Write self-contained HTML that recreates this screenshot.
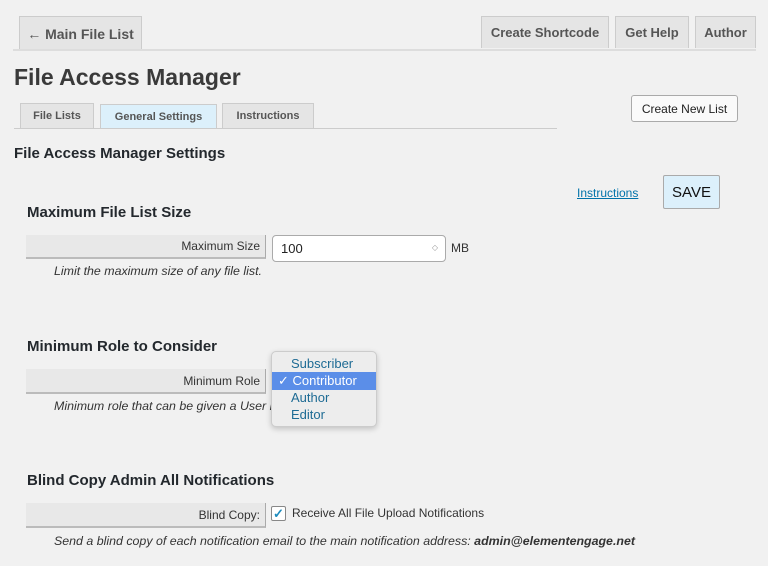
<!DOCTYPE html>
<html><head><meta charset="utf-8"><style>
*{box-sizing:border-box;margin:0;padding:0}
body{width:768px;height:566px;background:#f1f1f1;font-family:"Liberation Sans",sans-serif;color:#23282d;position:relative;overflow:hidden}
.a{position:absolute}
.tab{position:absolute;background:#e5e5e5;border:1px solid #ccc;border-bottom:none;color:#555;font-weight:bold;font-size:13px;display:flex;align-items:center;justify-content:center}
.h{position:absolute;font-weight:bold;font-size:15px;color:#23282d}
.lbl{position:absolute;left:26px;width:240px;background:#e8e8e8;border-right:1px solid #aaa;border-bottom:2px solid #bbb;font-size:12px;color:#333;text-align:right;padding-right:5px;display:flex;align-items:center;justify-content:flex-end}
.d{position:absolute;left:54px;font-style:italic;font-size:12.4px;color:#333}
</style></head><body>
<div class="tab" style="left:19px;top:16px;width:123px;height:34px;font-size:14px">← Main File List</div>
<div class="tab" style="left:481px;top:16px;width:128px;height:32px">Create Shortcode</div>
<div class="tab" style="left:615px;top:16px;width:74px;height:32px">Get Help</div>
<div class="tab" style="left:695px;top:16px;width:61px;height:32px">Author</div>
<div class="a" style="left:13px;top:49px;width:743px;height:2px;background:#ddd"></div>
<div class="a" style="left:14px;top:64px;font-size:23px;font-weight:bold;color:#3a3a3a">File Access Manager</div>
<div class="tab" style="left:20px;top:103px;width:74px;height:25px;font-size:11px">File Lists</div>
<div class="tab" style="left:100px;top:104px;width:117px;height:24px;font-size:11px;background:#dcf0fb">General Settings</div>
<div class="tab" style="left:222px;top:103px;width:92px;height:25px;font-size:11px">Instructions</div>
<div class="a" style="left:14px;top:128px;width:543px;height:1px;background:#ccc"></div>
<div class="a" style="left:631px;top:95px;width:107px;height:27px;background:#fafafa;border:1px solid #aaa;border-radius:3px;font-size:12px;display:flex;align-items:center;justify-content:center;color:#222">Create New List</div>
<div class="h" style="left:14px;top:145px">File Access Manager Settings</div>
<div class="a" style="left:577px;top:186px;font-size:12px;color:#0073aa;text-decoration:underline">Instructions</div>
<div class="a" style="left:663px;top:175px;width:57px;height:34px;background:#dcf0fb;border:1px solid #aaa;border-radius:2px;font-size:15px;display:flex;align-items:center;justify-content:center;color:#111">SAVE</div>

<div class="h" style="left:27px;top:204px">Maximum File List Size</div>
<div class="lbl" style="top:235px;height:24px">Maximum Size</div>
<div class="a" style="left:272px;top:235px;width:174px;height:27px;background:#fff;border:1px solid #aaa;border-radius:4px;font-size:13px;padding:5px 0 0 8px;color:#222">100<span style="position:absolute;right:7px;top:7px;font-size:8px;color:#999">◇</span></div>
<div class="a" style="left:451px;top:241px;font-size:12px;color:#333">MB</div>
<div class="d" style="top:264px">Limit the maximum size of any file list.</div>

<div class="h" style="left:27px;top:338px">Minimum Role to Consider</div>
<div class="lbl" style="top:369px;height:25px">Minimum Role</div>
<div class="d" style="top:399px">Minimum role that can be given a User List or Group List.</div>
<div class="a" style="left:271px;top:351px;width:106px;height:76px;background:#ededed;border:1px solid #ccc;border-radius:5px;box-shadow:0 2px 6px rgba(0,0,0,.2);font-size:13px;color:#1e6b94">
<div style="position:absolute;left:19px;top:4px">Subscriber</div>
<div style="position:absolute;left:0;top:20px;width:104px;height:18px;background:#5b8ee8;color:#fff;padding:1px 0 0 6px">✓ Contributor</div>
<div style="position:absolute;left:19px;top:38px">Author</div>
<div style="position:absolute;left:19px;top:55px">Editor</div>
</div>

<div class="h" style="left:27px;top:472px">Blind Copy Admin All Notifications</div>
<div class="lbl" style="top:503px;height:25px">Blind Copy:</div>
<div class="a" style="left:271px;top:506px;width:15px;height:15px;background:#fff;border:1px solid #888;border-radius:2px;color:#1e8cbe;font-size:13px;line-height:13px;text-align:center;font-weight:bold">✓</div>
<div class="a" style="left:292px;top:506px;font-size:12px;color:#333">Receive All File Upload Notifications</div>
<div class="d" style="top:534px">Send a blind copy of each notification email to the main notification address: <b>admin@elementengage.net</b></div>
</body></html>
